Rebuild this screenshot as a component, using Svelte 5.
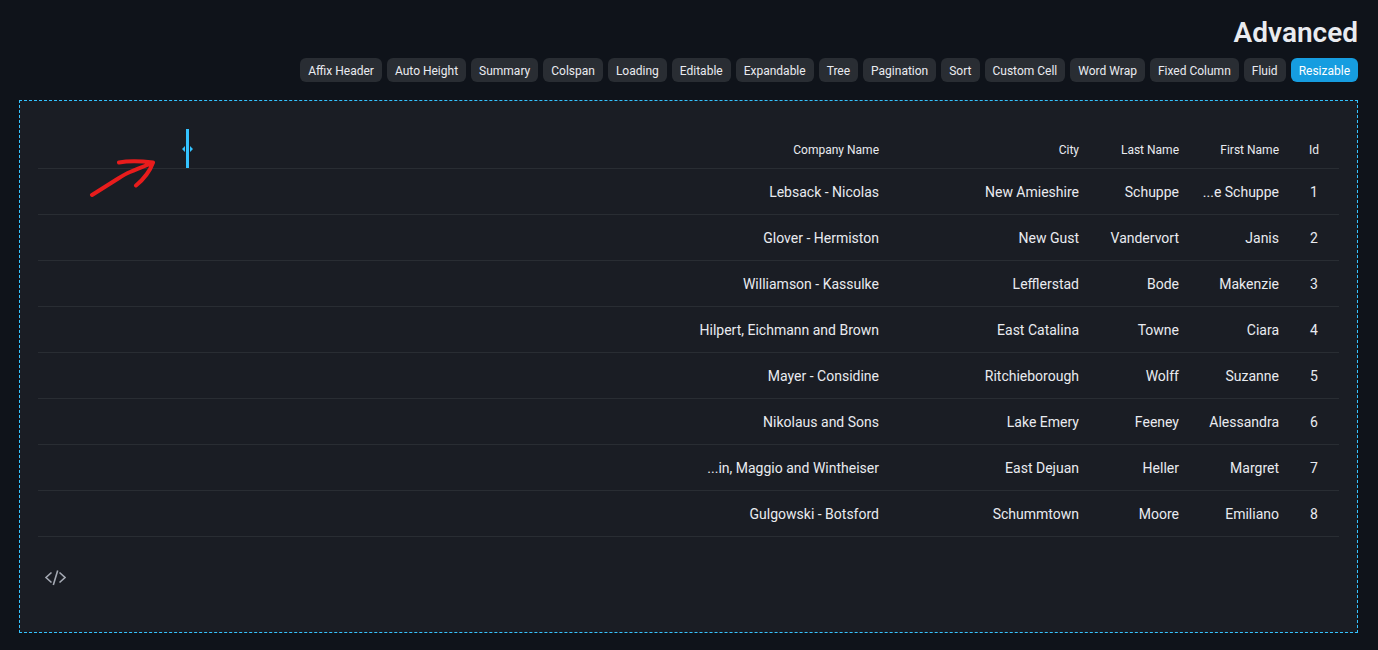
<script>
  const examples = [
    'Resizable', 'Fluid', 'Fixed Column', 'Word Wrap', 'Custom Cell', 'Sort', 'Pagination', 'Tree',
    'Expandable', 'Editable', 'Loading', 'Colspan', 'Summary', 'Auto Height', 'Affix Header'
  ];
  let active = $state('Resizable');

  const rows = [
    [1, '...e Schuppe', 'Schuppe', 'New Amieshire', 'Lebsack - Nicolas'],
    [2, 'Janis', 'Vandervort', 'New Gust', 'Glover - Hermiston'],
    [3, 'Makenzie', 'Bode', 'Lefflerstad', 'Williamson - Kassulke'],
    [4, 'Ciara', 'Towne', 'East Catalina', 'Hilpert, Eichmann and Brown'],
    [5, 'Suzanne', 'Wolff', 'Ritchieborough', 'Mayer - Considine'],
    [6, 'Alessandra', 'Feeney', 'Lake Emery', 'Nikolaus and Sons'],
    [7, 'Margret', 'Heller', 'East Dejuan', '...in, Maggio and Wintheiser'],
    [8, 'Emiliano', 'Moore', 'Schummtown', 'Gulgowski - Botsford']
  ];
</script>

<main dir="rtl">
  <h2>Advanced</h2>
  <nav>
    {#each examples as name}
      <button type="button" class="tab" class:active={active === name} onclick={() => (active = name)}>{name}</button>
    {/each}
  </nav>

  <section>
    <table>
      <colgroup>
        <col class="id" /><col class="name" /><col class="name" /><col class="wide" /><col class="wide" /><col class="resized" /><col />
      </colgroup>
      <thead>
        <tr>
          <th class="center">Id</th>
          <th>First Name</th>
          <th>Last Name</th>
          <th>City</th>
          <th>Company Name</th>
          <th class="resizing">
            <span class="handle">
              <svg viewBox="0 0 11 8" width="11" height="8" aria-hidden="true">
                <path d="M0 4 L3 1 V7 Z M11 4 L8 1 V7 Z" fill="currentColor" />
              </svg>
            </span>
            <svg class="arrow" viewBox="0 0 70 42" width="70" height="42" aria-hidden="true">
              <path d="M5 37 L28 22.500 C36 17.500 38 16 43 14 C50 11 56 9 66 4.500 M32 4.500 C42 2.500 54 3 66 4.500 C63 13 58 20 49 27.500" />
            </svg>
          </th>
          <th></th>
        </tr>
      </thead>
      <tbody>
        {#each rows as row}
          <tr>
            {#each row as cell, i}
              <td class:center={i === 0}><bdi dir="ltr">{cell}</bdi></td>
            {/each}
            <td></td>
            <td></td>
          </tr>
        {/each}
      </tbody>
    </table>
    <footer>
      <button type="button" class="code" aria-label="Show code">
        <svg viewBox="0 0 22 16" width="22" height="16" aria-hidden="true">
          <path d="M7.500 2.500 L2 7.500 L7.500 12.500 M15.500 2.500 L21 7.500 L15.500 12.500 M13.700 0.500 L9.300 15" />
        </svg>
      </button>
    </footer>
  </section>
</main>

<style>
  :global(body) {
    margin: 0;
    background: #0f131a;
  }
  main {
    padding: 13px 20px 17px 19px;
    font-family: "Segoe UI", Roboto, "Open Sans", sans-serif;
    font-size: 14px;
    color: #e9ebf0;
  }
  h2 {
    margin: 0;
    font-size: 28px;
    line-height: 40px;
    font-weight: 600;
  }
  nav {
    display: flex;
    flex-wrap: wrap;
    gap: 5px;
    padding: 5px 0 18px;
  }
  button {
    border: 0;
    font-family: inherit;
    cursor: pointer;
  }
  .tab {
    padding: 3px 8px 1px;
    border-radius: 6px;
    background: #292d33;
    color: #e9ebf0;
    font-size: 12px;
    line-height: 20px;
  }
  .tab.active {
    background: #169de0;
    color: #fff;
  }
  section {
    border: 1px dashed #34c3ff;
    background: #1a1d24;
    padding: 28px 18px 36px;
  }
  table {
    width: 100%;
    table-layout: fixed;
    border-collapse: separate;
    border-spacing: 0;
  }
  .id { width: 50px; }
  .name { width: 100px; }
  .wide { width: 200px; }
  .resized { width: 503px; }
  th, td {
    box-sizing: border-box;
    height: 46px;
    padding: 0 10px;
    border-bottom: 1px solid #292d33;
    text-align: right;
    font-weight: 400;
    white-space: nowrap;
  }
  th {
    height: 40px;
    padding-top: 2px;
    font-size: 12px;
  }
  .center {
    text-align: center;
  }
  .resizing {
    position: relative;
  }
  .handle {
    position: absolute;
    left: 0;
    top: 0;
    bottom: 0;
    width: 3px;
    background: #34c3ff;
    color: #34c3ff;
  }
  .handle svg {
    position: absolute;
    left: -4px;
    top: 16px;
  }
  .arrow {
    position: absolute;
    left: -99px;
    top: 29px;
    fill: none;
    stroke: #e81c1c;
    stroke-width: 4;
    stroke-linecap: round;
    stroke-linejoin: round;
  }
  footer {
    display: flex;
    justify-content: flex-end;
    padding-top: 23px;
  }
  .code {
    display: grid;
    place-items: center;
    width: 34px;
    height: 36px;
    padding: 0;
    background: none;
    color: #a4a9b3;
  }
  .code path {
    fill: none;
    stroke: currentColor;
    stroke-width: 1.600;
  }
</style>
